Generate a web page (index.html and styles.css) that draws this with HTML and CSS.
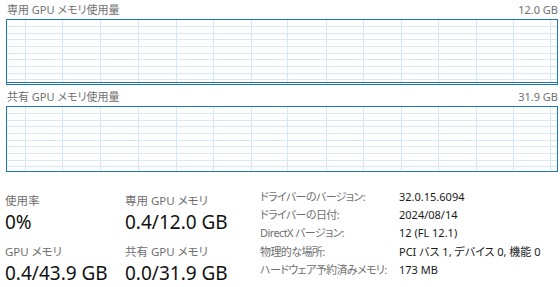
FILE: index.html
```html
<!DOCTYPE html>
<html lang="ja">
<head>
<meta charset="utf-8">
<link rel="stylesheet" href="styles.css">
</head>
<body>
<div class="page">
  <section class="chart">
    <div class="chart-head"><span>専用 GPU メモリ使用量</span><span>12.0 GB</span></div>
    <div class="graph">
      <svg class="grid" viewBox="0 0 550 64" preserveAspectRatio="none" width="550" height="64">
        <g stroke="#d6e8f4" stroke-width="1">
          <path d="M0 6.5H550M0 13.5H550M0 19.5H550M0 26.5H550M0 33.5H550M0 39.5H550M0 46.5H550M0 53.5H550M0 59.5H550"/>
          <path d="M18.5 0V64M55.5 0V64M93.5 0V64M131.5 0V64M169.5 0V64M206.5 0V64M244.5 0V64M280.5 0V64M319.5 0V64M356.5 0V64M394.5 0V64M431.5 0V64M469.5 0V64M506.5 0V64M543.5 0V64"/>
        </g>
        <path d="M0 62.5H550" stroke="#1c79b7" stroke-width="1"/>
      </svg>
    </div>
  </section>
  <section class="chart">
    <div class="chart-head"><span>共有 GPU メモリ使用量</span><span>31.9 GB</span></div>
    <div class="graph">
      <svg class="grid" viewBox="0 0 550 64" preserveAspectRatio="none" width="550" height="64">
        <g stroke="#d6e8f4" stroke-width="1">
          <path d="M0 6.5H550M0 13.5H550M0 19.5H550M0 26.5H550M0 33.5H550M0 39.5H550M0 46.5H550M0 53.5H550M0 59.5H550"/>
          <path d="M18.5 0V64M55.5 0V64M93.5 0V64M131.5 0V64M169.5 0V64M206.5 0V64M244.5 0V64M280.5 0V64M319.5 0V64M356.5 0V64M394.5 0V64M431.5 0V64M469.5 0V64M506.5 0V64M543.5 0V64"/>
        </g>
      </svg>
    </div>
  </section>
  <section class="stats">
    <div class="stat-col">
      <div class="stat">
        <div class="stat-label">使用率</div>
        <div class="stat-value">0%</div>
      </div>
      <div class="stat">
        <div class="stat-label">GPU メモリ</div>
        <div class="stat-value">0.4/43.9 GB</div>
      </div>
    </div>
    <div class="stat-col">
      <div class="stat">
        <div class="stat-label">専用 GPU メモリ</div>
        <div class="stat-value">0.4/12.0 GB</div>
      </div>
      <div class="stat">
        <div class="stat-label">共有 GPU メモリ</div>
        <div class="stat-value">0.0/31.9 GB</div>
      </div>
    </div>
    <dl class="info">
      <dt>ドライバーのバージョン:</dt><dd>32.0.15.6094</dd>
      <dt>ドライバーの日付:</dt><dd>2024/08/14</dd>
      <dt>DirectX バージョン:</dt><dd>12 (FL 12.1)</dd>
      <dt>物理的な場所:</dt><dd>PCI バス 1, デバイス 0, 機能 0</dd>
      <dt>ハードウェア予約済みメモリ:</dt><dd>173 MB</dd>
    </dl>
  </section>
</div>
</body>
</html>
```

FILE: styles.css
```css
html, body {
  margin: 0;
  padding: 0;
  background: #ffffff;
}

body {
  font-family: "Noto Sans", "Noto Sans CJK JP", sans-serif;
  font-feature-settings: "palt";
  color: #1a1a1a;
  width: 560px;
  height: 287px;
  overflow: hidden;
}

.page {
  padding: 0 2px 0 6px;
}

.chart-head {
  display: flex;
  justify-content: space-between;
  align-items: flex-end;
  height: 19px;
  font-size: 11px;
  line-height: 15px;
  color: #707070;
  padding-left: 1px;
  box-sizing: border-box;
  padding-bottom: 2px;
}

.chart + .chart .chart-head {
  height: 21px;
}

.graph {
  width: 550px;
  height: 64px;
  border: 1px solid #1c79b7;
}

.grid {
  display: block;
}

.stats {
  display: flex;
  margin-top: 20px;
  margin-left: -1px;
}

.stat-col {
  display: flex;
  flex-direction: column;
  gap: 8px;
}

.stat-col:first-child {
  width: 120px;
}

.stat-col:nth-child(2) {
  width: 135px;
}

.stat-label {
  font-size: 11.5px;
  line-height: 18px;
  color: #707070;
}

.stat-value {
  font-size: 19px;
  line-height: 25px;
  color: #111111;
}

.info {
  margin: -4px 0 0 0;
  display: grid;
  grid-template-columns: 139px auto;
  grid-auto-rows: 18.2px;
  row-gap: 0;
  font-size: 11px;
  line-height: 18px;
}

.info dt {
  color: #707070;
  letter-spacing: -0.6px;
  white-space: nowrap;
}

.info dd {
  margin: 0;
  color: #1a1a1a;
  white-space: nowrap;
}
```
